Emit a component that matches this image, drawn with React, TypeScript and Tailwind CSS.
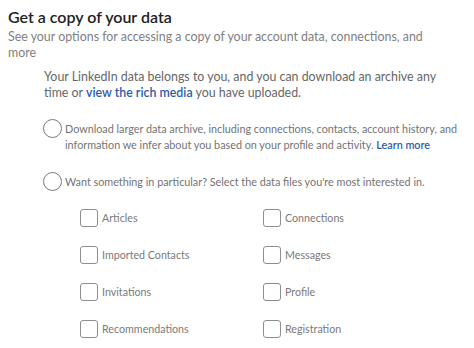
import React from "react";

const items: [string, string][] = [
  ["Articles", "Connections"],
  ["Imported Contacts", "Messages"],
  ["Invitations", "Profile"],
  ["Recommendations", "Registration"],
];

function Box({ label }: { label: string }) {
  return (
    <div className="flex items-center h-[18px]">
      <span className="w-[18px] h-[18px] rounded-[3px] border border-[#8e8e8e] shrink-0" />
      <span className="ml-[4px] text-[10.7px] text-[#7a7a7a]">{label}</span>
    </div>
  );
}

function Radio({ children }: { children: React.ReactNode }) {
  return (
    <div className="flex items-start pl-[35px]">
      <span className="mt-[-2px] w-[19px] h-[19px] rounded-full border border-[#7a7a7a] shrink-0" />
      <div className="ml-[3px] text-[10.8px] text-[#737373] leading-4">{children}</div>
    </div>
  );
}

export default function App() {
  return (
    <div
      className="w-[474px] h-[348px] bg-white px-2 pt-[7px] overflow-hidden"
      style={{ fontFamily: 'Lato, "Open Sans", sans-serif' }}
    >
      <h1 className="text-[16px] font-semibold leading-5 text-[#222]">Get a copy of your data</h1>
      <p className="mt-[2px] text-[12.4px] leading-4 text-[#808080] pr-8">
        See your options for accessing a copy of your account data, connections, and more
      </p>
      <p className="mt-2 pl-9 pr-[12px] text-[12.4px] leading-4 text-[#666]">
        Your LinkedIn data belongs to you, and you can download an archive any
        <br />
        time or <span className="text-[#2d5da8] font-semibold">view the rich media</span> you have uploaded.
      </p>
      <div className="mt-[20px]">
        <Radio>
          Download larger data archive, including connections, contacts, account history, and
          information we infer about you based on your profile and activity.{" "}
          <span className="text-[#2d5da8] font-semibold">Learn more</span>
        </Radio>
      </div>
      <div className="mt-[21px]">
        <Radio>Want something in particular? Select the data files you're most interested in.</Radio>
      </div>
      <div className="mt-[18px] pl-[72px] grid grid-cols-[183px_1fr] gap-y-[19px]">
        {items.map(([a, b]) => (
          <React.Fragment key={a}>
            <Box label={a} />
            <Box label={b} />
          </React.Fragment>
        ))}
      </div>
    </div>
  );
}
